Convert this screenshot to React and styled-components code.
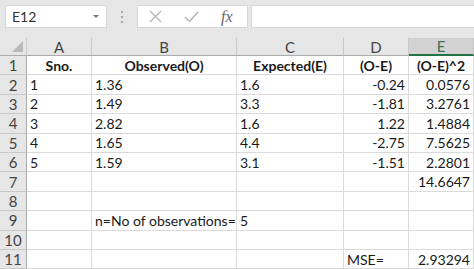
import styled, { createGlobalStyle } from "styled-components";

const Global = createGlobalStyle`
  html, body {
    margin: 0;
    padding: 0;
    background: #ffffff;
  }
  body {
    font-family: Lato, "Liberation Sans", sans-serif;
  }
`;

const Window = styled.div`
  width: 474px;
  height: 269px;
  overflow: hidden;
  background: #e6e6e6;
`;

const Toolbar = styled.div`
  display: flex;
  align-items: center;
  height: 38px;
  padding: 5px 0 10px 5px;
  box-sizing: border-box;
`;

const NameBox = styled.div`
  width: 102px;
  height: 23px;
  box-sizing: border-box;
  background: #fff;
  border: 1px solid #d6d6d6;
  display: flex;
  align-items: center;
  justify-content: space-between;
  padding: 0 7px 0 6px;
  font-size: 14px;
  color: #333;
`;

const Caret = styled.span`
  width: 0;
  height: 0;
  border-left: 3px solid transparent;
  border-right: 3px solid transparent;
  border-top: 3px solid #777;
`;

const Grip = styled.div`
  width: 30px;
  display: flex;
  flex-direction: column;
  align-items: center;
  gap: 3px;
  span {
    width: 2px;
    height: 2px;
    background: #a8a8a8;
  }
`;

const FxBox = styled.div`
  width: 111px;
  height: 23px;
  box-sizing: border-box;
  background: #fff;
  border: 1px solid #d6d6d6;
  display: flex;
  align-items: center;
  padding-left: 11px;
  gap: 22px;
`;

const FxLabel = styled.span`
  font-family: "Liberation Serif", serif;
  font-style: italic;
  font-size: 16px;
  color: #666;
`;

const FormulaInput = styled.div`
  flex: 1;
  height: 23px;
  margin-left: 3px;
  box-sizing: border-box;
  background: #fff;
  border: 1px solid #d6d6d6;
  border-right: none;
`;

const Sheet = styled.div`
  display: grid;
  grid-template-columns: 27px 65px 145px 107px 65px 65px;
  grid-template-rows: 18px repeat(11, 19.4px);
  background: #fff;
`;

const Corner = styled.div`
  position: relative;
  background: #e6e6e6;
  border-right: 1px solid #c8c8c8;
  border-bottom: 1px solid #ababab;
  box-sizing: border-box;
  &::after {
    content: "";
    position: absolute;
    right: 3px;
    bottom: 3px;
    width: 0;
    height: 0;
    border-left: 11px solid transparent;
    border-bottom: 11px solid #b9b9b9;
  }
`;

const ColHead = styled.div`
  display: flex;
  align-items: center;
  justify-content: center;
  box-sizing: border-box;
  font-size: 15px;
  color: ${(p) => (p.$active ? "#3f6f52" : "#444")};
  background: ${(p) => (p.$active ? "#d2d2d2" : "#e6e6e6")};
  border-right: 1px solid #c8c8c8;
  border-bottom: ${(p) => (p.$active ? "2px solid #217346" : "1px solid #ababab")};
`;

const RowHead = styled.div`
  display: flex;
  align-items: center;
  justify-content: center;
  box-sizing: border-box;
  font-size: 15px;
  color: #444;
  background: #e6e6e6;
  border-right: 1px solid #ababab;
  border-bottom: 1px solid #c8c8c8;
`;

const Cell = styled.div`
  display: flex;
  align-items: center;
  justify-content: ${(p) =>
    p.$align === "right" ? "flex-end" : p.$align === "center" ? "center" : "flex-start"};
  box-sizing: border-box;
  padding: 0 3px;
  font-size: 14px;
  font-weight: ${(p) => (p.$bold ? 700 : 400)};
  color: #1a1a1a;
  white-space: nowrap;
  border-right: 1px solid #dadada;
  border-bottom: 1px solid #dadada;
`;

const XIcon = () => (
  <svg width="13" height="13" viewBox="0 0 13 13">
    <path d="M1 1 L12 12 M12 1 L1 12" stroke="#b5b5b5" strokeWidth="1.3" fill="none" />
  </svg>
);

const CheckIcon = () => (
  <svg width="15" height="13" viewBox="0 0 15 13">
    <path d="M1 7 L5.5 11.5 L14 2" stroke="#b5b5b5" strokeWidth="1.5" fill="none" />
  </svg>
);

const cols = ["A", "B", "C", "D", "E"];
const aligns = ["left", "left", "left", "right", "right"];

const rows = [
  { cells: ["Sno.", "Observed(O)", "Expected(E)", "(O-E)", "(O-E)^2"], head: true },
  { cells: ["1", "1.36", "1.6", "-0.24", "0.0576"] },
  { cells: ["2", "1.49", "3.3", "-1.81", "3.2761"] },
  { cells: ["3", "2.82", "1.6", "1.22", "1.4884"] },
  { cells: ["4", "1.65", "4.4", "-2.75", "7.5625"] },
  { cells: ["5", "1.59", "3.1", "-1.51", "2.2801"] },
  { cells: ["", "", "", "", "14.6647"] },
  { cells: ["", "", "", "", ""] },
  { cells: ["", "n=No of observations=", "5", "", ""] },
  { cells: ["", "", "", "", ""] },
  { cells: ["", "", "", "MSE=", "2.93294"], alignD: "left" },
];

export default function App() {
  return (
    <Window>
      <Global />
      <Toolbar>
        <NameBox>
          E12
          <Caret />
        </NameBox>
        <Grip>
          <span />
          <span />
          <span />
        </Grip>
        <FxBox>
          <XIcon />
          <CheckIcon />
          <FxLabel>fx</FxLabel>
        </FxBox>
        <FormulaInput />
      </Toolbar>
      <Sheet>
        <Corner />
        {cols.map((c) => (
          <ColHead key={c} $active={c === "E"}>
            {c}
          </ColHead>
        ))}
        {rows.map((r, i) => [
          <RowHead key={`h${i}`}>{i + 1}</RowHead>,
          ...r.cells.map((v, j) => (
            <Cell
              key={`${i}-${j}`}
              $bold={r.head}
              $align={r.head ? "center" : j === 3 && r.alignD ? r.alignD : aligns[j]}
            >
              {v}
            </Cell>
          )),
        ])}
      </Sheet>
    </Window>
  );
}
